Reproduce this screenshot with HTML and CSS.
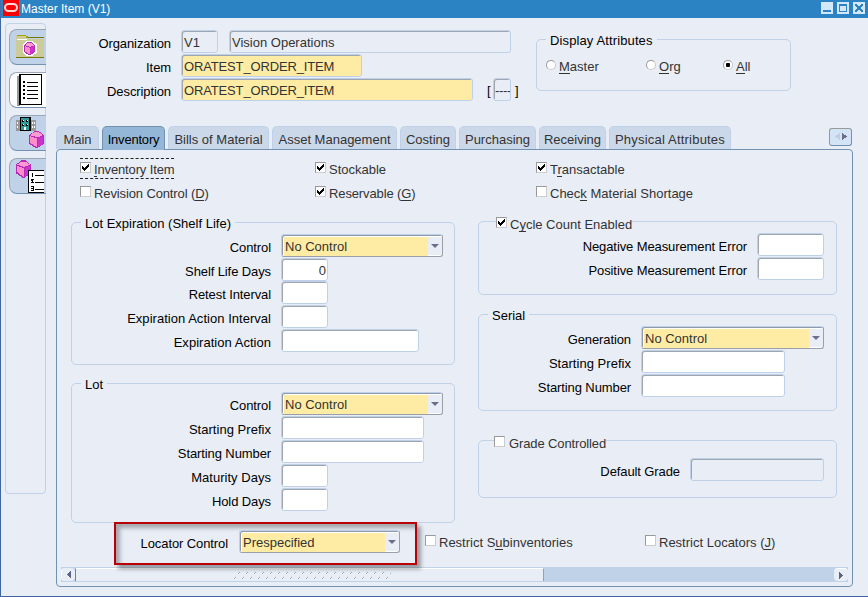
FILE: index.html
```html
<!DOCTYPE html>
<html lang="en">
<head>
<meta charset="utf-8">
<title>Master Item (V1)</title>
<link rel="stylesheet" href="styles.css">
</head>
<body>
<svg class="defs" width="0" height="0">
  <symbol id="tick" viewBox="0 0 11 11"><path d="M2 4h1v1h1v1h1V5h1V4h1V3h1V2h1v3H8v1H7v1H6v1H5v1H4V8H3V7H2z" fill="#000"/></symbol>
  <symbol id="cube" viewBox="0 0 14 16"><path d="M5 0h4l5 4v8l-6 4H6l-6-4V4z" fill="#b52bb5"/><path d="M1 4l4-3h4l4 3-5 2z" fill="#ff9bd2"/><path d="M1 5l6 2v8l-6-4z" fill="#ff8ccb"/><path d="M8 7l5-2v7l-5 3z" fill="#cc33cc"/></symbol>
</svg>
<header class="titlebar">
  <svg class="oracle" width="16" height="16" viewBox="0 0 16 16"><path d="M0 0h16v16H0z" fill="#f00"/><rect x="2" y="4" width="12" height="7" rx="3.5" fill="none" stroke="#ffd9d9" stroke-width="2"/></svg>
  <span class="title">Master Item (V1)</span>
  <span class="winbtns">
    <svg width="12" height="12"><path d="M0 0h12v12H0z"/><path class="ink" d="M2 8h8v2H2z"/></svg>
    <svg width="12" height="12"><path d="M0 0h12v12H0z"/><path class="ink" fill-rule="evenodd" d="M2 2h8v8H2zM3 4v5h6V4z"/></svg>
    <svg width="12" height="12"><path d="M0 0h12v12H0z"/><path class="ink" d="M2 2h2v1h1v1h2V3h1V2h2v2H9v1H8v2h1v1h1v2H8V9H7V8H5v1H4v1H2V8h1V7h1V5H3V4H2z"/></svg>
  </span>
</header>
<main class="window">
  <nav class="sidebar">
    <div class="side"><svg width="28" height="24" viewBox="0 0 28 24"><path d="M0 1h9l2 3h17v19H0z" fill="#cccc99"/><path d="M1 0h9v1H1zM10 1h2v2h-2z" fill="#a5a500"/><path d="M12 2h16v1H12zM0 22h28v1H0z" fill="#777700"/><path d="M1 4.500h10" stroke="#fff"/><path d="M11 6h5l5 3v9l-5 3h-5l-4-3V9z" fill="#fff"/><use href="#cube" x="7" y="7" width="13" height="13"/></svg></div>
    <div class="side on"><svg class="page" width="26" height="32" viewBox="0 0 26 32"><path d="M0 2h3v30H0z" fill="#999"/><path d="M2 0h23v31H2z"/><path d="M4 1h20v29H4z" fill="#fff"/><path d="M6 7h2v2H6zm0 4h2v2H6zm0 4h2v2H6zm0 4h2v2H6zm0 4h2v2H6zM10 8h11v1H10zm0 4h11v1H10zm0 4h11v1H10zm0 4h11v1H10zm0 4h11v1H10z"/></svg></div>
    <div class="side"><svg width="28" height="32" viewBox="0 0 28 32"><path d="M0 3h4v11H0zM14 3h6v11h-6z" fill="#999"/><path d="M1 5h1v2H1zm0 4h1v2H1zM16 5h1v2h-1zm2 0h1v2h-1zm-2 4h1v2h-1zm2 0h1v2h-1z" fill="#fff"/><path d="M4 0h11v14H4z"/><path d="M5 1h8v12H5z" fill="#399"/><path d="M6 3h2v2H6zm4 0h2v2h-2zM6 7h2v2H6zm4 0h2v2h-2z" fill="#000"/><path d="M7 3h1v1H7zm4 0h1v1h-1zM7 7h1v1H7zm4 0h1v1h-1zM8 10h2v3H8z" fill="#fff"/><use href="#cube" x="13" y="14" width="15" height="17"/></svg></div>
    <div class="side"><svg width="28" height="33" viewBox="0 0 28 33"><use href="#cube" x="0" y="0" width="15" height="18"/><path d="M12 10h16v23H12z"/><path d="M13 11h15v21H13z" fill="#fff"/><path d="M16 13h1v4h-1zM19 15h9v1h-9zM15 19h3v1h-1v2h1v1h-3v-1h1v-1h-1zM19 22h9v1h-9zM15 26h3v5h-3v-1h2v-1h-2v-1h2v-1h-2zM19 29h9v1h-9z"/></svg></div>
  </nav>
  <section class="content">
    <div class="head">
      <div class="head-fields">
        <div class="row"><label>Organization</label><span class="f ro w37">V1</span><span class="f ro w282 ml">Vision Operations</span></div>
        <div class="row"><label>Item</label><span class="f req w181">ORATEST_ORDER_ITEM</span></div>
        <div class="row"><label>Description</label><span class="f req w292">ORATEST_ORDER_ITEM</span><span class="flex"><b>[</b><span class="f ro w18">----</span><b>]</b></span></div>
      </div>
      <div class="group display">
        <div class="legend">Display Attributes</div>
        <div class="radios">
          <span class="opt"><i class="radio"></i><span><u>M</u>aster</span></span>
          <span class="opt"><i class="radio"></i><span><u>O</u>rg</span></span>
          <span class="opt"><i class="radio sel"></i><span><u>A</u>ll</span></span>
        </div>
      </div>
    </div>
    <div class="tabbar">
      <div class="tab t1">Main</div><div class="tab t2 active">Inventory</div><div class="tab t3">Bills of Material</div><div class="tab t4">Asset Management</div><div class="tab t5">Costing</div><div class="tab t6">Purchasing</div><div class="tab t7">Receiving</div><div class="tab t8">Physical Attributes</div>
      <div class="tabnav"><svg width="13" height="7"><path d="M5 0v7L0 3.500z" fill="#c0cee0"/><path d="M7 0v7l5-3.500z" fill="#6b6f8c"/></svg></div>
    </div>
    <div class="panel">
      <div class="checks">
        <span class="chk focus"><i class="box"><svg><use href="#tick"/></svg></i><span><u>I</u>nventory Item</span></span>
        <span class="chk"><i class="box"><svg><use href="#tick"/></svg></i><span>Stockable</span></span>
        <span class="chk"><i class="box"><svg><use href="#tick"/></svg></i><span>T<u>r</u>ansactable</span></span>
        <span class="chk tight"><i class="box"></i><span>Revision Control (<u>D</u>)</span></span>
        <span class="chk tight"><i class="box"><svg><use href="#tick"/></svg></i><span>Reservable (<u>G</u>)</span></span>
        <span class="chk"><i class="box"></i><span>Chec<u>k</u> Material Shortage</span></span>
      </div>
      <div class="cols">
        <div class="left">
          <div class="group expiry">
            <div class="legend">Lot Expiration (Shelf Life)</div>
            <div class="rows">
              <div class="row"><label>Control</label><span class="select w162"><span>No Control</span><i></i></span></div>
              <div class="row short"><label>Shelf Life Days</label><span class="f num w47">0</span></div>
              <div class="row"><label>Retest Interval</label><span class="f w47"></span></div>
              <div class="row"><label class="wide">Expiration Action Interval</label><span class="f w47"></span></div>
              <div class="row"><label class="wide">Expiration Action</label><span class="f w138"></span></div>
            </div>
          </div>
          <div class="group lot">
            <div class="legend">Lot</div>
            <div class="rows">
              <div class="row"><label>Control</label><span class="select w162"><span>No Control</span><i></i></span></div>
              <div class="row"><label class="wide">Starting Prefix</label><span class="f w143"></span></div>
              <div class="row"><label>Starting Number</label><span class="f w143"></span></div>
              <div class="row"><label class="wide">Maturity Days</label><span class="f w47"></span></div>
              <div class="row"><label>Hold Days</label><span class="f w47"></span></div>
            </div>
          </div>
        </div>
        <div class="right">
          <div class="group cycle">
            <div class="legend check"><span class="chk"><i class="box"><svg><use href="#tick"/></svg></i><span>C<u>y</u>cle Count Enabled</span></span></div>
            <div class="rows">
              <div class="row"><label>Negative Measurement Error</label><span class="f w67"></span></div>
              <div class="row"><label>Positive Measurement Error</label><span class="f w67"></span></div>
            </div>
          </div>
          <div class="group serial">
            <div class="legend">Serial</div>
            <div class="rows">
              <div class="row"><label>Generation</label><span class="select w183"><span>No Control</span><i></i></span></div>
              <div class="row"><label class="wide">Starting Prefix</label><span class="f w144"></span></div>
              <div class="row"><label>Starting Number</label><span class="f w144"></span></div>
            </div>
          </div>
          <div class="group grade">
            <div class="legend check"><span class="chk tight"><i class="box"></i><span>Grade Controlled</span></span></div>
            <div class="rows">
              <div class="row"><label>Default Grade</label><span class="f ro w134"></span></div>
            </div>
          </div>
        </div>
      </div>
      <div class="bottom">
        <div class="callout"><div class="row"><label>Locator Control</label><span class="select w161"><span>Prespecified</span><i></i></span></div></div>
        <span class="chk sub"><i class="box"></i><span>Restrict S<u>u</u>binventories</span></span>
        <span class="chk loc"><i class="box"></i><span>Restrict Locators (<u>J</u>)</span></span>
      </div>
      <div class="scroll">
        <div class="arrow l"><svg width="4" height="7"><path d="M4 0v7L0 3.500z"/></svg></div>
        <div class="thumb"><svg width="158" height="8"><defs><pattern id="grip" width="8" height="8" patternUnits="userSpaceOnUse"><path d="M5 1h1V0h1v1H6v1H5zM1 6h1V5h1v1H2v1H1z" fill="#91a9c6"/><path d="M4 1h1v1H4zM6 1h1v1H6zM0 6h1v1H0zM2 6h1v1H2z" fill="#fff"/></pattern></defs><path d="M0 0h158v8H0z" fill="url(#grip)"/></svg></div>
        <div class="arrow r"><svg width="4" height="7"><path d="M0 0v7l4-3.500z"/></svg></div>
      </div>
    </div>
  </section>
</main>
</body>
</html>
```
FILE: styles.css
```css
* { box-sizing: border-box; }
body {
  margin: 0; width: 868px; height: 597px; overflow: hidden;
  display: flex; flex-direction: column;
  background: #e9eef6; color: #000;
  font: 13px/16px "Liberation Sans", Arial, sans-serif;
}
svg { display: block; flex: none; shape-rendering: crispEdges; }
.defs { position: absolute; }
i { font-style: normal; }
u { text-decoration: none; box-shadow: 0 -1px 0 #333 inset; }
.titlebar { height: 18px; flex: none; display: flex; align-items: flex-start; background: #2b83c4; border-left: 1px solid #4470aa; padding: 0 3px 0 2px; color: #fff; }
.oracle { shape-rendering: auto; }
.title { margin-left: 2px; padding-top: 1px; font-size: 12px; }
.winbtns { margin: 2px 0 0 auto; display: flex; gap: 4px; }
.winbtns path { fill: #d2e7f7; }
.winbtns .ink { fill: #2b83c4; }
.window { height: 579px; display: flex; border-left: 1px solid #4066a0; border-bottom: 1px solid #4066a0; }
.sidebar { width: 41px; height: 471px; margin: 5px 0 0 4px; padding: 5px 0 0 3px; border: 1px solid #c0d2e8; border-radius: 4px; display: flex; flex-direction: column; gap: 7px; }
.side { height: 36px; width: 37px; padding: 5px 0 0 6px; background: #c0d2e8; border: 1px solid #9ba7b5; border-bottom-color: #7392b2; border-right: 0; border-radius: 8px 0 0 8px; overflow: hidden; }
.side:nth-child(3), .side:nth-child(4) { padding-top: 1px; }
.side.on { background: #fff; padding: 1px 0 0 7px; }
.content { width: 797px; margin-left: 10px; }
.head { height: 108px; display: flex; padding-top: 12px; }
.head-fields { width: 480px; }
.row { display: flex; height: 24px; align-items: flex-start; }
.row.short { height: 23px; }
label { text-align: right; padding-top: 6px; margin-right: 10px; white-space: nowrap; letter-spacing: -.1px; }
label.wide { letter-spacing: .03px; }
.head label { width: 115px; }
.f { flex: none; height: 23px; border: 1px solid #bfd1e8; border-radius: 3px; background: #fff; box-shadow: inset 1px 1px 0 #a0a6ae; color: #333; padding: 4px 2px 0; white-space: nowrap; overflow: hidden; }
.ro { background: #e9eef6; }
.req { background: #ffeca4; letter-spacing: -.15px; }
.num { text-align: right; padding-right: 1px; }
.ml { margin-left: 11px; }
.flex { display: flex; margin-left: 14px; }
.flex b { font-weight: 400; padding-top: 5px; width: 6px; }
.flex .f { padding-left: 1px; letter-spacing: -.3px; }
.flex .f + b { margin-left: 4px; }
.w18 { width: 18px; }
.w37 { width: 37px; }
.w47 { width: 47px; }
.w67 { width: 67px; }
.w134 { width: 134px; }
.w138 { width: 138px; }
.w143 { width: 143px; }
.w144 { width: 144px; }
.w161 { width: 161px; }
.w162 { width: 162px; }
.w181 { width: 181px; }
.w183 { width: 183px; }
.w282 { width: 282px; }
.w292 { width: 292px; }
.group { border: 1px solid #c0d2e8; border-radius: 5px; }
.legend { width: max-content; height: 16px; margin: -8px 0 0 9px; padding: 1px 4px 0; background: #e9eef6; white-space: nowrap; }
.display { width: 255px; height: 52px; margin-top: 9px; }
.display .legend { letter-spacing: .12px; }
.radios { display: flex; margin: 10px 0 0 9px; color: #333; }
.opt { display: flex; gap: 3px; }
.opt:nth-child(1) { width: 100px; }
.opt:nth-child(2) { width: 77px; }
.opt span { padding-top: 1px; height: 17px; }
.radio { width: 10px; height: 10px; margin-top: 2px; border: 1px solid #999; border-right-color: #c9c9c9; border-bottom-color: #c9c9c9; border-radius: 50%; background: #fff; }
.radio.sel { background: radial-gradient(circle, #000 0 2px, #fff 2.500px); }
.tabbar { height: 23px; display: flex; align-items: stretch; }
.tab { margin-right: 3px; padding-top: 5px; text-align: center; background: #cbd8e9; border: 1px solid #bfd1e8; border-bottom: 0; border-radius: 5px 5px 0 0; color: #333; white-space: nowrap; }
.tab.active { background: #94b7d7; border-color: #7392b2; color: #000; height: 24px; z-index: 1; letter-spacing: -.2px; }
.t1 { width: 43px; }
.t2 { width: 63px; }
.t3 { width: 101px; }
.t4 { width: 125px; }
.t5 { width: 56px; }
.t6 { width: 77px; }
.t7 { width: 67px; }
.t8 { width: 122px; letter-spacing: .2px; }
.tabnav { width: 23px; height: 18px; margin: 2px 1px 0 auto; padding: 4px 0 0 5px; border: 1px solid #999; border-right-color: #7392b2; border-bottom-color: #7392b2; border-radius: 3px; background: #d2e4f5; }
.panel { height: 438px; border: 1px solid #7392b2; border-radius: 4px; }
.checks { height: 72px; padding: 12px 0 0 23px; display: grid; grid-template-columns: 235px 221px 1fr; grid-template-rows: 24px 24px; }
.chk { display: flex; gap: 3px; color: #333; white-space: nowrap; width: max-content; height: 17px; }
.chk > span { height: 16px; }
.box { flex: none; width: 11px; height: 11px; background: #fff; border: 1px solid #999; border-right-color: #ccc; border-bottom-color: #ccc; }
.box svg { width: 11px; height: 11px; margin: -1px; }
.tight { letter-spacing: -.12px; }
.focus { border: dashed #222; border-width: 1px 0; margin-top: -4px; padding-top: 3px; height: 21px; letter-spacing: -.14px; }
.cols { height: 301px; display: flex; gap: 23px; padding-left: 14px; }
.left { width: 384px; }
.right { width: 359px; margin-top: -1px; }
.expiry { height: 143px; }
.expiry .rows { padding-top: 3px; }
.left label { width: 199px; }
.lot { height: 140px; margin-top: 18px; }
.cycle { height: 74px; }
.cycle label { width: 268px; }
.serial { height: 97px; margin-top: 19px; }
.serial .rows { padding-top: 3px; }
.serial label { width: 152px; }
.grade { height: 58px; margin-top: 29px; }
.grade .rows { padding-top: 6px; }
.grade label { width: 201px; }
.legend.check { margin: -5px 0 0 17px; padding: 0; height: 16px; }
.grade .legend.check { margin-left: 15px; }
.grade .chk { gap: 4px; }
.select { flex: none; display: flex; height: 23px; border: 1px solid; border-color: #bfd1e8 #9b9fa6 #9b9fa6 #bfd1e8; border-radius: 3px; background: #fff; box-shadow: inset 1px 1px 0 #8e9aab; padding: 2px 0 1px 2px; color: #333; }
.select span { flex: 1; background: #ffeca4; padding: 2px 0 0 1px; height: 19px; }
.select i { width: 14px; background: #e9eef6; display: flex; justify-content: center; align-items: center; }
.select i::after { content: ""; border: 4px solid transparent; border-top-color: #6b6f8c; border-bottom: 0; }
.bottom { height: 44px; margin-top: -1px; display: flex; }
.callout { width: 303px; height: 43px; margin-left: 57px; border: 2px solid #b70008; padding-top: 6px; box-shadow: 4px 4px 4px rgba(0,0,0,.35), inset 4px 4px 4px rgba(0,0,0,.3); position: relative; }
.callout .row { margin-left: -3px; }
.callout label { width: 115px; margin-right: 11px; }
.bottom .chk { margin-top: 13px; }
.bottom .sub { margin-left: 8px; width: 220px; }
.scroll { height: 15px; margin: 1px 4px 0; display: flex; background: #c0d2e8; padding: 1px 0; }
.arrow { width: 14px; background: #e9eef6; border-radius: 4px; padding: 3px 0 0 5px; }
.arrow path { fill: #5d6380; }
.arrow.l { border-left: 1px solid #fff; }
.arrow.r { margin-left: auto; border-top: 1px solid #fff; }
.thumb { width: 469px; background: #e9eef6; border-left: 1px solid #7480a0; border-right: 1px solid #8aa4c0; border-top: 1px solid #fff; padding: 3px 0 0 157px; }
```
